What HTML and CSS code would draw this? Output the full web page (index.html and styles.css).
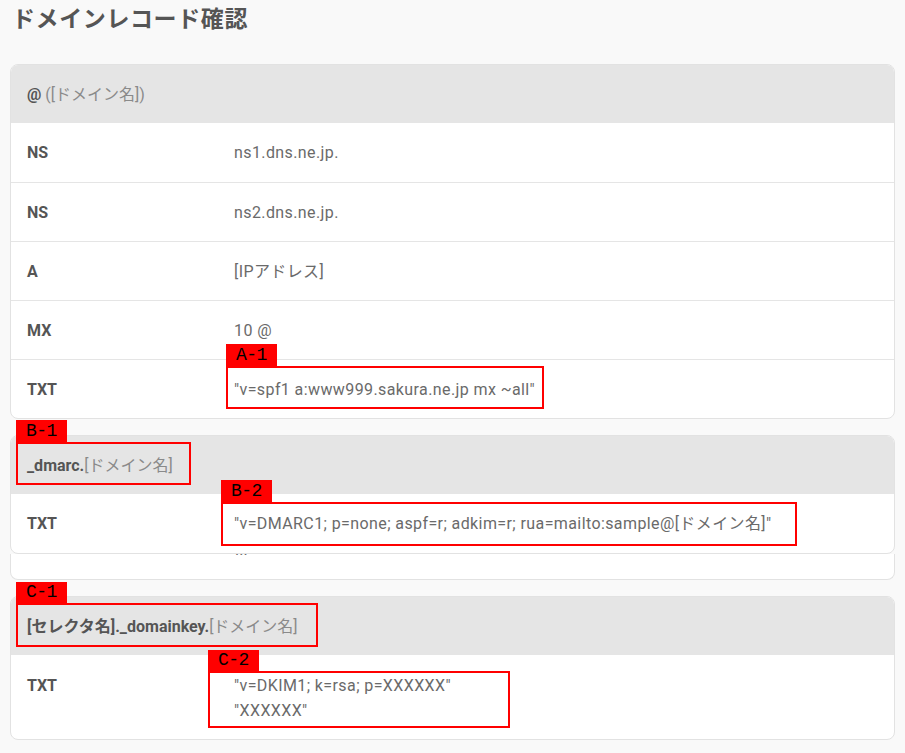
FILE: index.html
```html
<!DOCTYPE html>
<html lang="ja">
<head>
<meta charset="utf-8">
<title>ドメインレコード確認</title>
<link rel="stylesheet" href="styles.css">
</head>
<body>
<div class="page">
  <h1 class="title">ドメインレコード確認</h1>

  <section class="card">
    <div class="card-head"><span><b>@</b> <span class="muted">([ドメイン名])</span></span></div>
    <div class="row"><div class="type">NS</div><div class="val">ns1.dns.ne.jp.</div></div>
    <div class="row"><div class="type">NS</div><div class="val">ns2.dns.ne.jp.</div></div>
    <div class="row"><div class="type">A</div><div class="val">[IPアドレス]</div></div>
    <div class="row"><div class="type">MX</div><div class="val">10 @</div></div>
    <div class="row"><div class="type">TXT</div><div class="val">"v=spf1 a:www999.sakura.ne.jp mx ~all"</div></div>
    <span class="tag tag-a1">A-1</span>
    <span class="mark mark-a1"></span>
  </section>

  <div class="group">
    <section class="card card-stack">
      <div class="card-head"><span><b>_dmarc.</b><span class="muted">[ドメイン名]</span></span></div>
      <div class="row"><div class="type">TXT</div><div class="val">"v=DMARC1; p=none; aspf=r; adkim=r; rua=mailto:sample@[ドメイン名]"</div></div>
      <span class="tag tag-b1">B-1</span>
      <span class="mark mark-b1"></span>
      <span class="tag tag-b2">B-2</span>
      <span class="mark mark-b2"></span>
    </section>
    <div class="tail"><div class="tail-text">...</div></div>
  </div>

  <section class="card">
    <div class="card-head"><span><b>[セレクタ名]._domainkey.</b><span class="muted">[ドメイン名]</span></span></div>
    <div class="row row-tall"><div class="type">TXT</div><div class="val">"v=DKIM1; k=rsa; p=XXXXXX"<br>"XXXXXX"</div></div>
    <span class="tag tag-c1">C-1</span>
    <span class="mark mark-c1"></span>
    <span class="tag tag-c2">C-2</span>
    <span class="mark mark-c2"></span>
  </section>
</div>
</body>
</html>
```

FILE: styles.css
```css
* { box-sizing: border-box; }

html, body {
  margin: 0;
  padding: 0;
  background: #f9f9f9;
}

body {
  font-family: Roboto, "Noto Sans CJK JP", sans-serif;
  font-size: 16px;
  color: #555;
}

.page {
  padding: 0 10px 13px;
  display: flex;
  flex-direction: column;
  gap: 16px;
}

.title {
  margin: 0 0 14px 2px;
  font-family: "Noto Sans CJK JP", sans-serif;
  font-size: 23px;
  line-height: 34px;
  font-weight: 700;
  letter-spacing: 0.6px;
  color: #555;
}

.card {
  position: relative;
  background: #fff;
  border: 1px solid #e2e2e2;
  border-radius: 8px;
}

.card-head {
  height: 58px;
  background: #e5e5e5;
  border-radius: 7px 7px 0 0;
  padding: 0 16px;
  display: flex;
  align-items: center;
  line-height: 25px;
  color: #555;
}

.card-head b { font-weight: 700; }

.muted {
  color: #8a8a8a;
  font-weight: 400;
}

.row {
  display: grid;
  grid-template-columns: 207px 1fr;
  padding: 17px 16px 16px;
  line-height: 25px;
  border-top: 1px solid #e5e5e5;
}

.card-head + .row { border-top: none; padding-top: 17px; padding-bottom: 17px; }

.card-head + .row-tall { padding-top: 18px; padding-bottom: 16px; }

.type {
  font-weight: 700;
  color: #555;
}

.val {
  color: #6a6a6a;
  letter-spacing: 0.4px;
}

.group {
  display: flex;
  flex-direction: column;
}

.card-stack { z-index: 1; }

.tail {
  height: 26px;
  background: #fff;
  border: 1px solid #e2e2e2;
  border-top: none;
  border-radius: 0 0 8px 8px;
  overflow: hidden;
  padding-left: 224px;
}

.tail-text {
  margin-top: -17px;
  line-height: 25px;
  color: #6a6a6a;
}

/* annotations */
.tag {
  position: absolute;
  z-index: 3;
  width: 51px;
  height: 22px;
  background: #ff0000;
  color: #000;
  font-family: "Liberation Mono", "DejaVu Sans Mono", monospace;
  font-size: 18px;
  line-height: 22px;
  letter-spacing: -0.5px;
  padding-left: 10px;
}

.mark {
  position: absolute;
  z-index: 2;
  border: 2px solid #ff0000;
}

.tag-a1 { left: 215px; top: 279px; }
.mark-a1 { left: 215px; top: 301px; width: 318px; height: 43px; }

.tag-b1 { left: 5px; top: -16px; }
.mark-b1 { left: 5px; top: 6px; width: 175px; height: 43px; }
.tag-b2 { left: 210px; top: 44px; }
.mark-b2 { left: 210px; top: 66px; width: 576px; height: 44px; }

.tag-c1 { left: 5px; top: -15px; height: 21px; line-height: 21px; }
.mark-c1 { left: 5px; top: 6px; width: 302px; height: 44px; }
.tag-c2 { left: 197px; top: 53px; height: 21px; line-height: 21px; }
.mark-c2 { left: 197px; top: 74px; width: 302px; height: 57px; }
```
